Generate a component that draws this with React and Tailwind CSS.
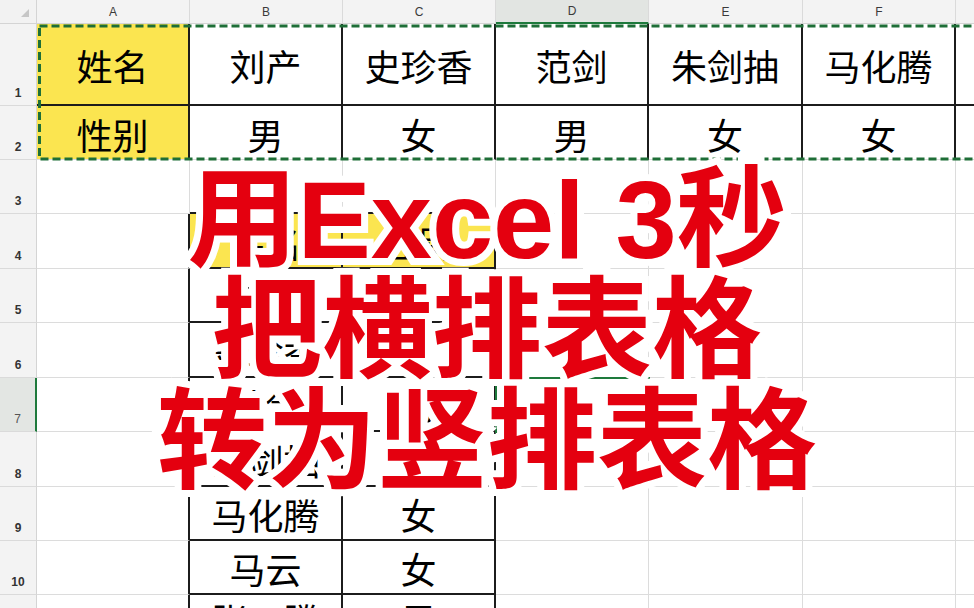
import React from "react";

const COLS = ["A", "B", "C", "D", "E", "F", "G"];
const ROWS = [1, 2, 3, 4, 5, 6, 7, 8, 9, 10, 11];

const cellFont = { fontFamily: '"Noto Sans CJK SC", "Noto Sans", sans-serif' };

function getCell(r, c) {
  const top = {
    1: ["姓名", "刘产", "史珍香", "范剑", "朱剑抽", "马化腾", ""],
    2: ["性别", "男", "女", "男", "女", "女", ""],
  };
  const bottom = {
    4: ["姓名", "性别"],
    5: ["刘产", "男"],
    6: ["史珍香", "女"],
    7: ["范剑", "男"],
    8: ["朱剑抽", "女"],
    9: ["马化腾", "女"],
    10: ["马云", "女"],
    11: ["张一腾", "男"],
  };
  if (top[r]) return top[r][c];
  if (bottom[r] && (c === 1 || c === 2)) return bottom[r][c - 1];
  return "";
}

function Cell({ r, c }) {
  const text = getCell(r, c);
  const yellow = (c === 0 && (r === 1 || r === 2)) || (r === 4 && (c === 1 || c === 2));

  const blackRight =
    ((r === 1 || r === 2) && c <= 5) || (r >= 4 && c <= 2);
  const blackBottom =
    r === 1 || ((r >= 3) && (c === 1 || c === 2));

  const cls = [
    "flex justify-center text-[36px] leading-none text-black overflow-hidden whitespace-nowrap",
    r === 11 ? "items-start pt-[4px]" : "items-center",
    yellow ? "bg-[#fbe550]" : "bg-white",
    blackRight ? "border-r-2 border-r-[#1c1c1c]" : "border-r border-r-[#dcdcdc]",
    blackBottom ? "border-b-2 border-b-[#1c1c1c]" : "border-b border-b-[#dcdcdc]",
  ].join(" ");

  return (
    <div className={cls} style={cellFont}>
      <span className="pt-[2px]">{text}</span>
    </div>
  );
}

function Marquee() {
  return (
    <svg className="absolute left-[37px] top-[24px] pointer-events-none" width="960" height="138" viewBox="0 0 960 138">
      <rect x="2.5" y="2" width="970" height="133" fill="none" stroke="#1e6e37" strokeWidth="3" strokeDasharray="8 4" />
    </svg>
  );
}

const lines = ["用Excel 3秒", "把横排表格", "转为竖排表格"];

function Title() {
  const base = "text-center text-[110px] leading-[111px] font-bold whitespace-nowrap";
  const font = { fontFamily: '"Liberation Sans", "Noto Sans CJK SC", sans-serif' };
  return (
    <div className="absolute left-0 right-0 top-[164px] pointer-events-none">
      <div className="relative">
        <div aria-hidden="true" className="absolute inset-0">
          {lines.map((l) => (
            <div key={l} className={base + " text-white [-webkit-text-stroke:14px_white]"} style={font}>
              {l}
            </div>
          ))}
        </div>
        <div className="relative">
          {lines.map((l) => (
            <div key={l} className={base + " text-[#e4000f]"} style={font}>
              {l}
            </div>
          ))}
        </div>
      </div>
    </div>
  );
}

export default function App() {
  return (
    <div className="relative w-[974px] h-[608px] overflow-hidden bg-white">
      <div className="grid w-[1110px] grid-cols-[37px_153px_153px_153px_153px_154px_153px_154px] grid-rows-[24px_82px_54px_54px_55px_54px_55px_54px_55px_54px_54px_54px]">
        <div className="relative bg-[#f2f2f2] border-r border-b border-[#d4d4d4]">
          <svg className="absolute right-[7px] bottom-[6px]" width="8" height="8" viewBox="0 0 8 8">
            <polygon points="8,0 8,8 0,8" fill="#c6c6c6" />
          </svg>
        </div>
        {COLS.map((c) => (
          <div
            key={c}
            className={
              "flex items-center justify-center text-[12px] text-[#3a3a3a] border-r border-r-[#dadada] " +
              (c === "D" ? "bg-[#e2e5e2] border-b-2 border-b-[#1e7a3c]" : "bg-[#f3f3f3] border-b border-b-[#d4d4d4]")
            }
            style={{ fontFamily: '"Liberation Sans", Arial, sans-serif' }}
          >
            {c}
          </div>
        ))}
        {ROWS.map((r) => (
          <React.Fragment key={r}>
            <div
              className={
                "flex items-end justify-center pb-[3px] text-[12px] border-b border-b-[#dadada] " +
                (r === 7
                  ? "bg-[#e3e6e3] border-r-2 border-r-[#1e7a3c] text-[#555]"
                  : "bg-[#f3f3f3] border-r border-r-[#d4d4d4] font-bold text-[#333]")
              }
              style={{ fontFamily: '"Liberation Sans", Arial, sans-serif' }}
            >
              {r}
            </div>
            {COLS.map((c, ci) => (
              <Cell key={c} r={r} c={ci} />
            ))}
          </React.Fragment>
        ))}
      </div>
      <div className="absolute left-[495px] top-[377px] w-[155px] h-[56px] border-2 border-[#1e7a3c] pointer-events-none" />
      <Marquee />
      <Title />
    </div>
  );
}
